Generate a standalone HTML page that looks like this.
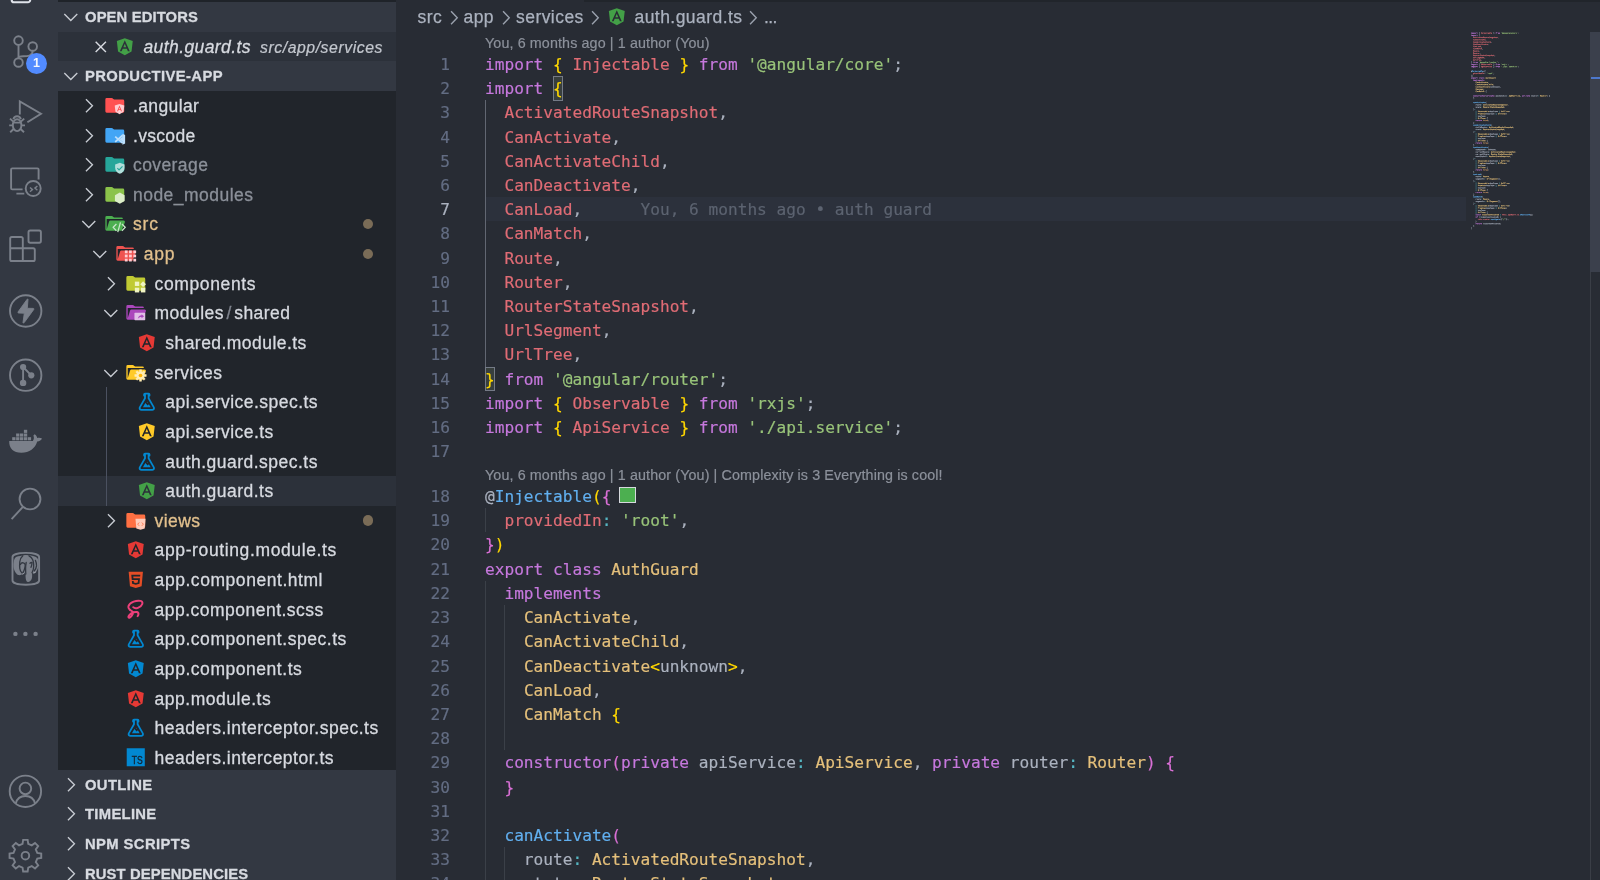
<!DOCTYPE html><html lang="en"><head><meta charset="utf-8"><title>auth.guard.ts — productive-app</title><style>
*{box-sizing:border-box;margin:0;padding:0}
html,body{width:1600px;height:880px;overflow:hidden;background:#282c34}
body{position:relative;font-family:"Liberation Sans",sans-serif;color:#d7dae0}
#act{will-change:transform;position:absolute;left:0;top:0;width:58px;height:880px;background:#333842}
#act svg{position:absolute;overflow:visible}
#act .badge{position:absolute;left:25.8px;top:52.5px;width:21.2px;height:21.2px;border-radius:50%;background:#528bff;color:#f4f7fd;font:bold 12.5px/21.2px "Liberation Sans",sans-serif;text-align:center}
#side{will-change:transform;position:absolute;left:58px;top:0;width:338px;height:880px;background:#21252b;overflow:hidden}
#side .topstrip{position:absolute;left:0;top:0;width:338px;height:2px;background:#1f2329}
.hdr{position:absolute;left:0;width:338px;height:29.7px;background:#333842}
.hdr svg{position:absolute;left:2.4px;top:4px}
.hdr .hl{-webkit-text-stroke:.3px;position:absolute;left:27px;top:0;line-height:30.6px;font-weight:bold;font-size:14.8px;letter-spacing:.12px;color:#d7dae0;white-space:nowrap}
#tree{position:absolute;left:0;top:90.9px;width:338px;height:678.8px;overflow:hidden}
.row{position:absolute;left:0;width:338px;height:29.64px;white-space:nowrap}
.row.sel{background:#2c313a}
.row .lbl{-webkit-text-stroke:.3px;position:absolute;top:0;line-height:31.2px;font-size:17.5px;letter-spacing:.42px;color:#d7dae0}
.row .desc{-webkit-text-stroke:.2px;position:absolute;top:0;line-height:31.4px;font-size:15.8px;letter-spacing:.55px;color:#c3c7ce}
.row .it{font-style:italic}
.row.dim .lbl{color:#8b9099}
.row.mod .lbl{color:#e2c08d}
.row .sl{font-style:normal;color:#7f848e;padding:0 2.5px}
.row .ic{position:absolute;top:4px;width:21.6px;height:21.6px}
.row .ic svg{display:block;width:21.6px;height:21.6px;overflow:visible}
.row .chv{position:absolute;top:4px;width:21.6px;height:21.6px}
.row .chv svg{display:block}
.row .dot{position:absolute;left:304.5px;top:9.6px;width:10.4px;height:10.4px;border-radius:50%;background:#7a6c57}
.row .cx{position:absolute;left:32.5px;top:4.2px}
.guide{margin-left:-.8px;position:absolute;width:1px;background:#4b5160}
#ed{will-change:transform;position:absolute;left:396px;top:0;width:1204px;height:880px;background:#282c34;overflow:hidden}
#ed .tabstrip{position:absolute;left:188px;top:0;width:1016px;height:1.8px;background:#21252b}
#bc{position:absolute;left:0;top:2px;width:1204px;height:29.6px;font-size:17.5px;color:#abb2bf}
#bc span{-webkit-text-stroke:.25px;position:absolute;top:0;line-height:30.4px;white-space:nowrap;letter-spacing:.45px}
#bc .bs{top:4.6px;line-height:0}
#bc .bi{top:4.2px;width:21.6px;height:21.6px;line-height:0}
#bc .bi svg{width:21.6px;height:21.6px}
#code{-webkit-text-stroke:.18px;z-index:0;position:absolute;left:0;top:0;width:1204px;height:880px;font-family:"DejaVu Sans Mono","Liberation Mono",monospace;font-size:16.15px;color:#abb2bf}
.cl{position:absolute;left:89px;height:24.25px;line-height:26.9px;white-space:pre}
.ln{position:absolute;left:0;width:54px;height:24.25px;line-height:26.9px;text-align:right;color:#636d83}
.ln.cur{color:#abb2bf}
.curline{position:absolute;left:89px;width:981px;height:24.25px;background:#2c313c}
.lens{-webkit-text-stroke:.2px;position:absolute;left:89px;height:20.3px;line-height:23.6px;font-family:"Liberation Sans",sans-serif;font-size:14.3px;letter-spacing:.12px;color:#8c919b;white-space:nowrap}
.ig{position:absolute;width:1px;background:#3b4048}
.ig.act{background:#626772}
.bm{position:relative}
.bm::before{content:"";box-sizing:border-box;position:absolute;left:0;top:-2.7px;width:9.7px;height:24.1px;border:1px solid #747a86;background:rgba(81,93,76,.4);z-index:-1}
.blame{color:#5c6370}
.sq{display:inline-block;width:17.6px;height:15.8px;background:#4caf50;border:1.3px solid #d5d8dd;vertical-align:-0.6px;margin-left:-2.4px}
#mm{position:absolute;left:1075px;top:32.2px;width:230px;height:360px;transform-origin:0 0;transform:scale(.5583,.5609);will-change:transform;font-family:"DejaVu Sans Mono","Liberation Mono",monospace;font-size:3.327px;line-height:4px;white-space:pre;color:#abb2bf;overflow:hidden;-webkit-text-stroke:.22px;opacity:.95}
#mm div{height:4px}
#mm span{-webkit-text-stroke-color:currentColor}
.sbtrack{position:absolute;left:1194px;top:32px;width:1px;height:848px;background:#3a3e46}
.sbslider{position:absolute;left:1194px;top:32px;width:10px;height:239.7px;background:#3b404c}
.sbmark{position:absolute;left:1194.5px;top:76.8px;width:9.5px;height:2.6px;background:#4d78cc}

</style></head><body>
<div id="act">
<svg width="58" height="880" viewBox="0 0 58 880" style="left:0;top:0"><path d="M11.7 -6 V0 a2.3 2.3 0 0 0 2.3 2.300 H27.900 a2.3 2.3 0 0 0 2.3 -2.300 V-6" fill="none" stroke="#e0e3ea" stroke-width="2.1"/><g fill="none" stroke="#7b808a" stroke-width="1.9"><circle cx="18.5" cy="40.6" r="4.3"/><circle cx="32.7" cy="46.5" r="4.3"/><circle cx="18.5" cy="62.5" r="4.3"/><path d="M18.5 44.9 V58.2 M32.7 50.8 C32.7 56.4 27 56.3 23.2 56.3 C20.5 56.3 18.5 57 18.5 58.2"/></g><g fill="none" stroke="#7b808a" stroke-width="1.9"><path d="M19.8 114.4 V101.4 L41 113.8 L27.4 122.3" stroke-linejoin="miter"/><ellipse cx="17.1" cy="125.2" rx="4.3" ry="5.9"/><path d="M13 122.6 H21.2 M13.4 119.2 A3.8 3.8 0 0 1 20.8 119.2" /><path d="M12.8 125.4 H9.2 M21.4 125.4 H25 M13.3 121.6 L10 118.6 M20.9 121.6 L24.2 118.6 M13.6 129 L10.2 132.2 M20.6 129 L24 132.2"/></g><g fill="none" stroke="#7b808a" stroke-width="1.9"><path d="M22.6 189.4 H12.3 a1.2 1.2 0 0 1 -1.2 -1.2 V169.6 a1.2 1.2 0 0 1 1.2 -1.2 H37.4 a1.2 1.2 0 0 1 1.2 1.2 V179.6 M16.4 193.6 H24.3"/><circle cx="33.2" cy="188.5" r="7.5"/><path d="M30 187.5 L32.5 189.6 L30 191.8 M37.4 186 L34.9 188.1 L37.4 190.3" stroke-width="1.4"/></g><g fill="none" stroke="#7b808a" stroke-width="1.9"><path d="M22.8 248.3 V238.6 a1.6 1.6 0 0 0 -1.6 -1.6 H11.8 a1.6 1.6 0 0 0 -1.6 1.6 V259.4 a1.6 1.6 0 0 0 1.6 1.6 H33.2 a1.6 1.6 0 0 0 1.6 -1.6 V249.9 a1.6 1.6 0 0 0 -1.6 -1.6 H10.2 M22.8 248.3 V261"/><rect x="28.5" y="230.5" width="12.4" height="12.2" rx="1.7"/></g><circle cx="25.7" cy="311" r="15.7" fill="none" stroke="#7b808a" stroke-width="1.9"/><path d="M27.2 299.2 L18 312 Q17.6 312.9 18.6 313 L24.3 313.2 L23 322.6 Q23.3 323.6 24.2 322.6 L33.8 309.4 Q34.2 308.5 33.2 308.4 L27.3 308.3 L28 299.4 Q27.8 298.6 27.2 299.2Z" fill="#7b808a" stroke="#7b808a" stroke-width="0.9" stroke-linejoin="round"/><circle cx="25.7" cy="375.2" r="15.7" fill="none" stroke="#7b808a" stroke-width="1.9"/><g fill="#7b808a"><circle cx="23.1" cy="367" r="3.1"/><circle cx="31.3" cy="375.3" r="3.1"/><circle cx="23.1" cy="382.9" r="3.2"/></g><path d="M23.1 367 V382.9 M23.1 367 L31.3 375.3" fill="none" stroke="#7b808a" stroke-width="1.9" stroke-width="1.5"/><g fill="#7b808a"><path d="M9.2 441 H32.8 C34 439.6 34.2 437.6 33.4 435.6 L34.6 434.3 C36.2 435.2 37 436.6 37.2 438 C38.8 437.4 40.6 437.6 42 438.6 C41.2 440.4 39.6 441.4 37.2 441.6 C35.2 448.6 29.4 452.8 21.4 452.8 C13.4 452.8 9 448.4 9.2 441Z"/><rect x="12.2" y="437.2" width="3.3" height="3.1"/><rect x="16.1" y="437.2" width="3.3" height="3.1"/><rect x="20" y="437.2" width="3.3" height="3.1"/><rect x="23.9" y="437.2" width="3.3" height="3.1"/><rect x="27.8" y="437.2" width="3.3" height="3.1"/><rect x="16.1" y="433.5" width="3.3" height="3.1"/><rect x="20" y="433.5" width="3.3" height="3.1"/><rect x="23.9" y="433.5" width="3.3" height="3.1"/><rect x="23.9" y="429.8" width="3.3" height="3.1"/></g><g fill="none" stroke="#7b808a" stroke-width="1.9"><circle cx="30" cy="499" r="10.4"/><path d="M22.9 506.8 L11.6 519.2"/></g><g><path d="M12.5 557 C12.5 554.600 18 552.900 25.800 552.900 C33.600 552.900 39.100 554.600 39.100 557 V580.600 C39.100 583 33.600 584.800 25.800 584.800 C18 584.800 12.500 583 12.500 580.600Z" fill="none" stroke="#7b808a" stroke-width="1.9"/><path d="M14 560.400 C13.500 562.600 13.400 565 13.600 567.300 C13.900 569.400 14.600 571.300 15.700 572.700 C16.500 573.900 17.400 574.800 18.400 575.100 C19.600 575.400 20.800 575.100 21.800 574.400 C22.500 573.900 23 573.300 23.500 572.700 C24.200 573.300 24.900 573.800 25.600 574.100 C25.500 575.700 25.500 577.400 25.800 578.900 C26.100 580.300 26.600 581.300 27.300 581.700 C28.200 582.100 29.200 581.900 30 581.200 C30.900 580.400 31.600 579.400 31.900 578.200 C32.300 576.400 32.100 574.500 32 572.700 C32.700 573.200 33.400 573.500 34.100 573.400 C35.200 573.200 36.100 572.100 36.800 570.700 C37.600 569.300 38.200 567.600 38.500 565.900 C38.800 563.800 38.700 561.700 38.200 559.800 C37.700 558.300 36.700 557.300 35.400 556.700 C34 556 32.400 555.700 30.700 555.500 C29.100 555.300 27.500 555.100 25.900 555.100 C24 555.100 22.200 555.500 20.400 556 C18.800 556.200 17.300 556.400 16 557 C14.900 557.800 14.300 559 14 560.400Z" fill="#7b808a"/><g fill="none" stroke="#333842" stroke-width="1.300" stroke-linecap="round"><path d="M22.800 555.800 C21 557.400 20 559.500 19.800 561.800 C19.600 564 19.500 566.400 19.800 568.600 C20.100 570.300 20.800 571.800 21.800 572.700 C22.500 573.300 23.200 573.500 23.900 573.400"/><path d="M20.400 564.500 C20.900 563.200 22 562.600 23.200 562.800 C24.400 563 25.100 563.800 25.200 564.900 C25.200 566.700 24.800 568.400 24.200 570 C23.900 571 23.400 571.900 22.800 572.700"/><path d="M26.200 562.500 C25.800 564.500 25.600 566.600 25.600 568.600 C25.600 570.400 25.700 572.300 25.800 574.100"/><path d="M29 555.800 C30.700 556.600 32 558 32.700 559.800 C33.400 561.500 33.700 563.400 33.700 565.200 C33.700 566.800 33.500 568.500 33.100 570 C32.800 571 32.400 571.900 32 572.700"/><path d="M30 563.200 C30.700 562.500 31.400 562.300 32 562.500 C32 564.200 31.600 565.800 31 567.300"/><path d="M35.400 560.400 C36.200 562.100 36.600 564 36.500 565.900 C36.300 567.700 35.600 569.400 34.400 570.700"/></g><path d="M22 574.200 L24.100 573.400 M33.500 573 L35.800 572" stroke="#9ea2ab" stroke-width="1" fill="none"/></g><g fill="#7b808a"><circle cx="15.4" cy="633.9" r="2.2"/><circle cx="25.4" cy="633.9" r="2.2"/><circle cx="35.6" cy="633.9" r="2.2"/></g><g fill="none" stroke="#7b808a" stroke-width="1.9"><circle cx="25.4" cy="791.3" r="15.7"/><circle cx="25.4" cy="788.4" r="5.8"/><path d="M15.8 803.4 C17 798.6 20.8 796 25.4 796 C30 796 33.8 798.6 35 803.4"/></g><g fill="none" stroke="#7b808a" stroke-width="1.9"><path d="M22.55 843.84 L23.15 839.86 L27.65 839.86 L28.25 843.84 L31.77 845.30 L35.01 842.91 L38.19 846.09 L35.80 849.33 L37.26 852.85 L41.24 853.45 L41.24 857.95 L37.26 858.55 L35.80 862.07 L38.19 865.31 L35.01 868.49 L31.77 866.10 L28.25 867.56 L27.65 871.54 L23.15 871.54 L22.55 867.56 L19.03 866.10 L15.79 868.49 L12.61 865.31 L15.00 862.07 L13.54 858.55 L9.56 857.95 L9.56 853.45 L13.54 852.85 L15.00 849.33 L12.61 846.09 L15.79 842.91 L19.03 845.30Z" stroke-linejoin="miter"/><circle cx="25.4" cy="855.7" r="3.8"/></g></svg><div class="badge">1</div>
</div>
<div id="side">
<div class="topstrip"></div>
<div class="hdr" style="top:2px"><svg width="21.6" height="21.6" viewBox="0 0 16 16"><path d="M3.2 5.9 L8 10.7 L12.8 5.9" fill="none" stroke="#c8ccd3" stroke-width="1"/></svg><span class="hl" style="letter-spacing:0.12px">OPEN EDITORS</span></div>
<div class="row sel" style="top:31.6px;height:29.7px"><svg class="cx" style="margin-left:-1px" width="21.6" height="21.6" viewBox="0 0 16 16"><path d="M4.6 4.6 L12.2 12.2 M12.2 4.6 L4.6 12.2" transform="translate(-0.4,-0.3)" fill="none" stroke="#d7dae0" stroke-width="1.05"/></svg><span class="ic" style="left:55.8px"><svg viewBox="0 0 24 24"><path d="M12 2.5l8.84 3.15-1.34 11.7L12 21.5l-7.5-4.15-1.34-11.7L12 2.5m0 2.1L6.47 17h2.06l1.11-2.78h4.7L15.45 17h2.06L12 4.6m1.62 7.9h-3.23L12 8.63z" fill="#43a047"/></svg></span><span class="lbl it" style="left:85.4px">auth.guard.ts</span><span class="desc it" style="left:202px">src/app/services</span></div>
<div class="hdr" style="top:61.3px"><svg width="21.6" height="21.6" viewBox="0 0 16 16"><path d="M3.2 5.9 L8 10.7 L12.8 5.9" fill="none" stroke="#c8ccd3" stroke-width="1"/></svg><span class="hl" style="letter-spacing:0.4px">PRODUCTIVE-APP</span></div>
<div id="tree">
<div class="row " style="top:0.00px"><span class="chv" style="left:19.9px"><svg width="21.6" height="21.6" viewBox="0 0 16 16"><path d="M5.9 3.2 L10.7 8 L5.9 12.8" fill="none" stroke="#c8ccd3" stroke-width="1"/></svg></span><span class="ic" style="left:45.9px"><svg viewBox="0 0 32 32"><path d="M13.844 7.536l-1.288-1.072A2 2 0 0 0 11.276 6H4a2 2 0 0 0-2 2v16a2 2 0 0 0 2 2h24a2 2 0 0 0 2-2V10a2 2 0 0 0-2-2H15.124a2 2 0 0 1-1.28-.464z" fill="#ff5252" transform="translate(0,15.4) scale(1,1.1) translate(0,-16)"/><path d="M23 13.2l7.1 2.5-1.1 9.3-6 3.4-6-3.4-1.100-9.3z" fill="#ffcdd2"/><path d="M23 15.6l-3.700 8.600h1.500l.75-1.900h2.900l.75 1.900h1.500z m-.95 5.500l.95-2.400.95 2.400z" fill="#ff5252"/></svg></span><span class="lbl" style="left:75.0px;letter-spacing:0.38px">.angular</span></div>
<div class="row " style="top:29.64px"><span class="chv" style="left:19.9px"><svg width="21.6" height="21.6" viewBox="0 0 16 16"><path d="M5.9 3.2 L10.7 8 L5.9 12.8" fill="none" stroke="#c8ccd3" stroke-width="1"/></svg></span><span class="ic" style="left:45.9px"><svg viewBox="0 0 32 32"><path d="M13.844 7.536l-1.288-1.072A2 2 0 0 0 11.276 6H4a2 2 0 0 0-2 2v16a2 2 0 0 0 2 2h24a2 2 0 0 0 2-2V10a2 2 0 0 0-2-2H15.124a2 2 0 0 1-1.28-.464z" fill="#42a5f5" transform="translate(0,15.4) scale(1,1.1) translate(0,-16)"/><path d="M27.300 12.800 L31.300 14.700 V27.500 L27.300 29.400z M27.300 17.600 L22.800 21.100 L27.300 24.600z" fill="#bbdefb" fill-rule="evenodd"/><path d="M16.600 17.300 L27.600 27 M16.600 24.900 L27.600 15.200" fill="none" stroke="#bbdefb" stroke-width="2.500"/></svg></span><span class="lbl" style="left:75.0px;letter-spacing:0.31px">.vscode</span></div>
<div class="row dim" style="top:59.28px"><span class="chv" style="left:19.9px"><svg width="21.6" height="21.6" viewBox="0 0 16 16"><path d="M5.9 3.2 L10.7 8 L5.9 12.8" fill="none" stroke="#c8ccd3" stroke-width="1"/></svg></span><span class="ic" style="left:45.9px"><svg viewBox="0 0 32 32"><path d="M13.844 7.536l-1.288-1.072A2 2 0 0 0 11.276 6H4a2 2 0 0 0-2 2v16a2 2 0 0 0 2 2h24a2 2 0 0 0 2-2V10a2 2 0 0 0-2-2H15.124a2 2 0 0 1-1.28-.464z" fill="#26a69a" transform="translate(0,15.4) scale(1,1.1) translate(0,-16)"/><path d="M23.500 12.800 L30.500 15.600 V20.400 C30.500 24.600 27.500 28.200 23.500 29.400 C19.500 28.200 16.500 24.600 16.500 20.400 V15.600z" fill="#b2dfdb"/><path d="M19.800 21 L22.300 23.500 L27.400 18.400" fill="none" stroke="#26a69a" stroke-width="1.7"/></svg></span><span class="lbl" style="left:75.0px;letter-spacing:0.41px">coverage</span></div>
<div class="row dim" style="top:88.92px"><span class="chv" style="left:19.9px"><svg width="21.6" height="21.6" viewBox="0 0 16 16"><path d="M5.9 3.2 L10.7 8 L5.9 12.8" fill="none" stroke="#c8ccd3" stroke-width="1"/></svg></span><span class="ic" style="left:45.9px"><svg viewBox="0 0 32 32"><path d="M13.844 7.536l-1.288-1.072A2 2 0 0 0 11.276 6H4a2 2 0 0 0-2 2v16a2 2 0 0 0 2 2h24a2 2 0 0 0 2-2V10a2 2 0 0 0-2-2H15.124a2 2 0 0 1-1.28-.464z" fill="#8bc34a" transform="translate(0,15.4) scale(1,1.1) translate(0,-16)"/><path d="M23.400 12.600 L30.600 16.700 V25.100 L23.400 29.200 L16.200 25.100 V16.700z" fill="#dcedc8"/></svg></span><span class="lbl" style="left:75.0px;letter-spacing:0.47px">node_modules</span></div>
<div class="row mod" style="top:118.56px"><span class="chv" style="left:19.9px"><svg width="21.6" height="21.6" viewBox="0 0 16 16"><path d="M3.2 5.9 L8 10.7 L12.8 5.9" fill="none" stroke="#c8ccd3" stroke-width="1"/></svg></span><span class="ic" style="left:45.9px"><svg viewBox="0 0 32 32"><path d="M28.967 12H9.442a2 2 0 0 0-1.898 1.368L4 24V10h24a2 2 0 0 0-2-2H15.124a2 2 0 0 1-1.28-.464l-1.288-1.072A2 2 0 0 0 11.276 6H4a2 2 0 0 0-2 2v16a2 2 0 0 0 2 2h22l4.805-11.212A2 2 0 0 0 28.967 12z" fill="#4caf50" transform="translate(0,15.4) scale(1,1.1) translate(0,-16)"/><g fill="none" stroke="#c8e6c9" stroke-width="1.9"><path d="M18.400 16.400 L13.600 21.300 L18.400 26.200 M26.600 16.400 L31.400 21.300 L26.600 26.200 M24.400 14 L20.400 28.400"/></g></svg></span><span class="lbl" style="left:75.0px;letter-spacing:0.78px">src</span><span class="dot"></span></div>
<div class="row mod" style="top:148.20px"><span class="chv" style="left:30.7px"><svg width="21.6" height="21.6" viewBox="0 0 16 16"><path d="M3.2 5.9 L8 10.7 L12.8 5.9" fill="none" stroke="#c8ccd3" stroke-width="1"/></svg></span><span class="ic" style="left:56.6px"><svg viewBox="0 0 32 32"><path d="M28.967 12H9.442a2 2 0 0 0-1.898 1.368L4 24V10h24a2 2 0 0 0-2-2H15.124a2 2 0 0 1-1.28-.464l-1.288-1.072A2 2 0 0 0 11.276 6H4a2 2 0 0 0-2 2v16a2 2 0 0 0 2 2h22l4.805-11.212A2 2 0 0 0 28.967 12z" fill="#ef5350" transform="translate(0,15.4) scale(1,1.1) translate(0,-16)"/><rect x="14.6" y="11.1" width="4.1" height="4.1" fill="#ffcdd2"/><rect x="14.6" y="17.2" width="4.1" height="4.1" fill="#ffcdd2"/><rect x="14.6" y="23.3" width="4.1" height="4.1" fill="#ffcdd2"/><rect x="20.8" y="11.1" width="4.1" height="4.1" fill="#ffcdd2"/><rect x="20.8" y="17.2" width="4.1" height="4.1" fill="#ffcdd2"/><rect x="20.8" y="23.3" width="4.1" height="4.1" fill="#ffcdd2"/><rect x="27.2" y="11.1" width="4.1" height="4.1" fill="#ffcdd2"/><rect x="27.2" y="17.2" width="4.1" height="4.1" fill="#ffcdd2"/><rect x="27.2" y="23.3" width="4.1" height="4.1" fill="#ffcdd2"/></svg></span><span class="lbl" style="left:85.8px;letter-spacing:0.70px">app</span><span class="dot"></span></div>
<div class="row " style="top:177.84px"><span class="chv" style="left:41.5px"><svg width="21.6" height="21.6" viewBox="0 0 16 16"><path d="M5.9 3.2 L10.7 8 L5.9 12.8" fill="none" stroke="#c8ccd3" stroke-width="1"/></svg></span><span class="ic" style="left:67.4px"><svg viewBox="0 0 32 32"><path d="M13.844 7.536l-1.288-1.072A2 2 0 0 0 11.276 6H4a2 2 0 0 0-2 2v16a2 2 0 0 0 2 2h24a2 2 0 0 0 2-2V10a2 2 0 0 0-2-2H15.124a2 2 0 0 1-1.28-.464z" fill="#c0ca33" transform="translate(0,15.4) scale(1,1.1) translate(0,-16)"/><rect x="14.6" y="12.8" width="6.5" height="6.4" fill="#f0f4c3"/><rect x="14.6" y="21.800" width="6.5" height="7" fill="#f0f4c3"/><rect x="23.500" y="21.800" width="6.7" height="7" fill="#f0f4c3"/><path d="M26.800 12.300 L31.100 16.600 L26.800 20.900 L22.500 16.600z" fill="#f0f4c3"/></svg></span><span class="lbl" style="left:96.6px;letter-spacing:0.62px">components</span></div>
<div class="row " style="top:207.48px"><span class="chv" style="left:41.5px"><svg width="21.6" height="21.6" viewBox="0 0 16 16"><path d="M3.2 5.9 L8 10.7 L12.8 5.9" fill="none" stroke="#c8ccd3" stroke-width="1"/></svg></span><span class="ic" style="left:67.4px"><svg viewBox="0 0 32 32"><path d="M28.967 12H9.442a2 2 0 0 0-1.898 1.368L4 24V10h24a2 2 0 0 0-2-2H15.124a2 2 0 0 1-1.28-.464l-1.288-1.072A2 2 0 0 0 11.276 6H4a2 2 0 0 0-2 2v16a2 2 0 0 0 2 2h22l4.805-11.212A2 2 0 0 0 28.967 12z" fill="#ab47bc" transform="translate(0,15.4) scale(1,1.1) translate(0,-16)"/><rect x="14" y="16" width="16" height="11" rx="1" fill="#e1bee7"/><path d="M24.500 18 L28.200 21 L24.500 24 V22.200 C22 22.200 20.300 23 19 25 C19.500 21.800 21.300 19.900 24.500 19.600z" fill="#ab47bc"/></svg></span><span class="lbl" style="left:96.6px;letter-spacing:0.45px">modules<i class="sl">/</i>shared</span></div>
<div class="row " style="top:237.12px"><span class="ic" style="left:78.2px"><svg viewBox="0 0 24 24"><path d="M12 2.5l8.84 3.15-1.34 11.7L12 21.5l-7.5-4.15-1.34-11.7L12 2.5m0 2.1L6.47 17h2.06l1.11-2.78h4.7L15.45 17h2.06L12 4.6m1.62 7.9h-3.23L12 8.63z" fill="#e53935"/></svg></span><span class="lbl" style="left:107.3px;letter-spacing:0.45px">shared.module.ts</span></div>
<div class="row " style="top:266.76px"><span class="chv" style="left:41.5px"><svg width="21.6" height="21.6" viewBox="0 0 16 16"><path d="M3.2 5.9 L8 10.7 L12.8 5.9" fill="none" stroke="#c8ccd3" stroke-width="1"/></svg></span><span class="ic" style="left:67.4px"><svg viewBox="0 0 32 32"><path d="M28.967 12H9.442a2 2 0 0 0-1.898 1.368L4 24V10h24a2 2 0 0 0-2-2H15.124a2 2 0 0 1-1.28-.464l-1.288-1.072A2 2 0 0 0 11.276 6H4a2 2 0 0 0-2 2v16a2 2 0 0 0 2 2h22l4.805-11.212A2 2 0 0 0 28.967 12z" fill="#ffca28" transform="translate(0,15.4) scale(1,1.1) translate(0,-16)"/><path d="M21.62 14.26 L21.52 11.53 L24.48 11.53 L24.38 14.26 L26.08 14.97 L27.95 12.96 L30.04 15.05 L28.03 16.92 L28.74 18.62 L31.47 18.52 L31.47 21.48 L28.74 21.38 L28.03 23.08 L30.04 24.95 L27.95 27.04 L26.08 25.03 L24.38 25.74 L24.48 28.47 L21.52 28.47 L21.62 25.74 L19.92 25.03 L18.05 27.04 L15.96 24.95 L17.97 23.08 L17.26 21.38 L14.53 21.48 L14.53 18.52 L17.26 18.62 L17.97 16.92 L15.96 15.05 L18.05 12.96 L19.92 14.97Z" fill="#ffecb3" stroke="#ffecb3" stroke-width="0.8" stroke-linejoin="round"/><circle cx="23" cy="20" r="2.7" fill="#ffb300"/></svg></span><span class="lbl" style="left:96.6px;letter-spacing:0.46px">services</span></div>
<div class="row " style="top:296.40px"><span class="ic" style="left:78.2px"><svg viewBox="0 0 24 24"><path d="M5,19A1,1 0 0,0 6,20H18A1,1 0 0,0 19,19C19,18.79 18.93,18.59 18.82,18.43L13,8.35V4H11V8.35L5.18,18.43C5.07,18.59 5,18.79 5,19M6,22A3,3 0 0,1 3,19C3,18.4 3.18,17.84 3.5,17.37L9,7.81V6A1,1 0 0,1 8,5V4A2,2 0 0,1 10,2H14A2,2 0 0,1 16,4V5A1,1 0 0,1 15,6V7.81L20.5,17.37C20.82,17.84 21,18.4 21,19A3,3 0 0,1 18,22H6M13,16L14.34,14.66L16.27,18H7.73L10.39,13.39L13,16M12.5,12A0.5,0.5 0 0,1 13,12.5A0.5,0.5 0 0,1 12.5,13A0.5,0.5 0 0,1 12,12.5A0.5,0.5 0 0,1 12.5,12Z" fill="#0288d1"/></svg></span><span class="lbl" style="left:107.3px;letter-spacing:0.46px">api.service.spec.ts</span></div>
<div class="row " style="top:326.04px"><span class="ic" style="left:78.2px"><svg viewBox="0 0 24 24"><path d="M12 2.5l8.84 3.15-1.34 11.7L12 21.5l-7.5-4.15-1.34-11.7L12 2.5m0 2.1L6.47 17h2.06l1.11-2.78h4.7L15.45 17h2.06L12 4.6m1.62 7.9h-3.23L12 8.63z" fill="#ffca28"/></svg></span><span class="lbl" style="left:107.3px;letter-spacing:0.45px">api.service.ts</span></div>
<div class="row " style="top:355.68px"><span class="ic" style="left:78.2px"><svg viewBox="0 0 24 24"><path d="M5,19A1,1 0 0,0 6,20H18A1,1 0 0,0 19,19C19,18.79 18.93,18.59 18.82,18.43L13,8.35V4H11V8.35L5.18,18.43C5.07,18.59 5,18.79 5,19M6,22A3,3 0 0,1 3,19C3,18.4 3.18,17.84 3.5,17.37L9,7.81V6A1,1 0 0,1 8,5V4A2,2 0 0,1 10,2H14A2,2 0 0,1 16,4V5A1,1 0 0,1 15,6V7.81L20.5,17.37C20.82,17.84 21,18.4 21,19A3,3 0 0,1 18,22H6M13,16L14.34,14.66L16.27,18H7.73L10.39,13.39L13,16M12.5,12A0.5,0.5 0 0,1 13,12.5A0.5,0.5 0 0,1 12.5,13A0.5,0.5 0 0,1 12,12.5A0.5,0.5 0 0,1 12.5,12Z" fill="#0288d1"/></svg></span><span class="lbl" style="left:107.3px;letter-spacing:0.48px">auth.guard.spec.ts</span></div>
<div class="row sel" style="top:385.32px"><span class="ic" style="left:78.2px"><svg viewBox="0 0 24 24"><path d="M12 2.5l8.84 3.15-1.34 11.7L12 21.5l-7.5-4.15-1.34-11.7L12 2.5m0 2.1L6.47 17h2.06l1.11-2.78h4.7L15.45 17h2.06L12 4.6m1.62 7.9h-3.23L12 8.63z" fill="#43a047"/></svg></span><span class="lbl" style="left:107.3px;letter-spacing:0.48px">auth.guard.ts</span></div>
<div class="row mod" style="top:414.96px"><span class="chv" style="left:41.5px"><svg width="21.6" height="21.6" viewBox="0 0 16 16"><path d="M5.9 3.2 L10.7 8 L5.9 12.8" fill="none" stroke="#c8ccd3" stroke-width="1"/></svg></span><span class="ic" style="left:67.4px"><svg viewBox="0 0 32 32"><path d="M13.844 7.536l-1.288-1.072A2 2 0 0 0 11.276 6H4a2 2 0 0 0-2 2v16a2 2 0 0 0 2 2h24a2 2 0 0 0 2-2V10a2 2 0 0 0-2-2H15.124a2 2 0 0 1-1.28-.464z" fill="#ff7043" transform="translate(0,15.4) scale(1,1.1) translate(0,-16)"/><path d="M15.500 13 H30.500 L29.200 27.400 L23 29.400 L16.800 27.400z" fill="#ffccbc"/><path d="M21 18.600 L18.800 21 L21 23.400 M25 18.600 L27.200 21 L25 23.400" fill="none" stroke="#ff7043" stroke-width="1.300"/></svg></span><span class="lbl" style="left:96.6px;letter-spacing:0.41px">views</span><span class="dot"></span></div>
<div class="row " style="top:444.60px"><span class="ic" style="left:67.4px"><svg viewBox="0 0 24 24"><path d="M12 2.5l8.84 3.15-1.34 11.7L12 21.5l-7.5-4.15-1.34-11.7L12 2.5m0 2.1L6.47 17h2.06l1.11-2.78h4.7L15.45 17h2.06L12 4.6m1.62 7.9h-3.23L12 8.63z" fill="#e53935"/></svg></span><span class="lbl" style="left:96.6px;letter-spacing:0.62px">app-routing.module.ts</span></div>
<div class="row " style="top:474.24px"><span class="ic" style="left:67.4px"><svg viewBox="0 0 24 24"><path d="M12,17.56L16.07,16.43L16.62,10.33H9.38L9.2,8.3H16.8L17,6.31H7L7.56,12.32H14.45L14.22,14.9L12,15.5L9.78,14.9L9.64,13.24H7.64L7.93,16.43L12,17.56M4.07,3H19.93L18.5,19.2L12,21L5.5,19.2L4.07,3Z" fill="#e44d26"/></svg></span><span class="lbl" style="left:96.6px;letter-spacing:0.55px">app.component.html</span></div>
<div class="row " style="top:503.88px"><span class="ic" style="left:67.4px"><svg viewBox="0 0 24 24"><path d="M9.1 9.100 C10.500 10.600 12.800 10.400 14.400 9.800 C16.800 8.900 18.600 7.400 19.200 5.600 C19.800 3.800 19 2.600 17.200 2.100 C15.200 1.600 12 2 9.600 3 C6.800 4.200 4.400 6 3.800 8 C3.400 9.600 4 10.800 5.200 11.800 C6.400 12.800 8.200 13.400 8.700 14.600 C9.200 16 8.600 17.400 7.600 18.400 C6.600 19.600 5.600 20.600 4.900 20.800 C4 21 3.500 20 4 19 C4.600 17.800 5.600 17 6.600 16.300 C7.600 15.600 8.600 15.100 9.600 14.800 C11 14.400 12.400 14.200 13.300 14.500 C14.600 15 15.200 16 14.900 17.200 C14.700 18 14.400 18.600 14 19" fill="none" stroke="#ec407a" stroke-width="2.2" stroke-linecap="round" stroke-linejoin="round"/></svg></span><span class="lbl" style="left:96.6px;letter-spacing:0.48px">app.component.scss</span></div>
<div class="row " style="top:533.52px"><span class="ic" style="left:67.4px"><svg viewBox="0 0 24 24"><path d="M5,19A1,1 0 0,0 6,20H18A1,1 0 0,0 19,19C19,18.79 18.93,18.59 18.82,18.43L13,8.35V4H11V8.35L5.18,18.43C5.07,18.59 5,18.79 5,19M6,22A3,3 0 0,1 3,19C3,18.4 3.18,17.84 3.5,17.37L9,7.81V6A1,1 0 0,1 8,5V4A2,2 0 0,1 10,2H14A2,2 0 0,1 16,4V5A1,1 0 0,1 15,6V7.81L20.5,17.37C20.82,17.84 21,18.4 21,19A3,3 0 0,1 18,22H6M13,16L14.34,14.66L16.27,18H7.73L10.39,13.39L13,16M12.5,12A0.5,0.5 0 0,1 13,12.5A0.5,0.5 0 0,1 12.5,13A0.5,0.5 0 0,1 12,12.5A0.5,0.5 0 0,1 12.5,12Z" fill="#0288d1"/></svg></span><span class="lbl" style="left:96.6px;letter-spacing:0.54px">app.component.spec.ts</span></div>
<div class="row " style="top:563.16px"><span class="ic" style="left:67.4px"><svg viewBox="0 0 24 24"><path d="M12 2.5l8.84 3.15-1.34 11.7L12 21.5l-7.5-4.15-1.34-11.7L12 2.5m0 2.1L6.47 17h2.06l1.11-2.78h4.7L15.45 17h2.06L12 4.6m1.62 7.9h-3.23L12 8.63z" fill="#0288d1"/></svg></span><span class="lbl" style="left:96.6px;letter-spacing:0.54px">app.component.ts</span></div>
<div class="row " style="top:592.80px"><span class="ic" style="left:67.4px"><svg viewBox="0 0 24 24"><path d="M12 2.5l8.84 3.15-1.34 11.7L12 21.5l-7.5-4.15-1.34-11.7L12 2.5m0 2.1L6.47 17h2.06l1.11-2.78h4.7L15.45 17h2.06L12 4.6m1.62 7.9h-3.23L12 8.63z" fill="#e53935"/></svg></span><span class="lbl" style="left:96.6px;letter-spacing:0.51px">app.module.ts</span></div>
<div class="row " style="top:622.44px"><span class="ic" style="left:67.4px"><svg viewBox="0 0 24 24"><path d="M5,19A1,1 0 0,0 6,20H18A1,1 0 0,0 19,19C19,18.79 18.93,18.59 18.82,18.43L13,8.35V4H11V8.35L5.18,18.43C5.07,18.59 5,18.79 5,19M6,22A3,3 0 0,1 3,19C3,18.4 3.18,17.84 3.5,17.37L9,7.81V6A1,1 0 0,1 8,5V4A2,2 0 0,1 10,2H14A2,2 0 0,1 16,4V5A1,1 0 0,1 15,6V7.81L20.5,17.37C20.82,17.84 21,18.4 21,19A3,3 0 0,1 18,22H6M13,16L14.34,14.66L16.27,18H7.73L10.39,13.39L13,16M12.5,12A0.5,0.5 0 0,1 13,12.5A0.5,0.5 0 0,1 12.5,13A0.5,0.5 0 0,1 12,12.5A0.5,0.5 0 0,1 12.5,12Z" fill="#0288d1"/></svg></span><span class="lbl" style="left:96.6px;letter-spacing:0.52px">headers.interceptor.spec.ts</span></div>
<div class="row " style="top:652.08px"><span class="ic" style="left:67.4px"><svg viewBox="0 0 24 24"><rect x="1.9" y="1.4" width="20.100" height="20" fill="#0288d1"/><text x="7.6" y="19" font-family="Liberation Sans,sans-serif" font-size="11.6" textLength="12.2" lengthAdjust="spacingAndGlyphs" fill="#14222e" stroke="#14222e" stroke-width="0.35">TS</text></svg></span><span class="lbl" style="left:96.6px;letter-spacing:0.51px">headers.interceptor.ts</span></div>
<div class="guide" style="left:48.6px;top:296.4px;height:118.6px"></div>
</div>
<div class="hdr" style="top:769.7px"><svg width="21.6" height="21.6" viewBox="0 0 16 16"><path d="M5.9 3.2 L10.7 8 L5.9 12.8" fill="none" stroke="#c8ccd3" stroke-width="1"/></svg><span class="hl" style="letter-spacing:0.35px">OUTLINE</span></div>
<div class="hdr" style="top:799.34px"><svg width="21.6" height="21.6" viewBox="0 0 16 16"><path d="M5.9 3.2 L10.7 8 L5.9 12.8" fill="none" stroke="#c8ccd3" stroke-width="1"/></svg><span class="hl" style="letter-spacing:0.3px">TIMELINE</span></div>
<div class="hdr" style="top:828.98px"><svg width="21.6" height="21.6" viewBox="0 0 16 16"><path d="M5.9 3.2 L10.7 8 L5.9 12.8" fill="none" stroke="#c8ccd3" stroke-width="1"/></svg><span class="hl" style="letter-spacing:0.4px">NPM SCRIPTS</span></div>
<div class="hdr" style="top:858.62px"><svg width="21.6" height="21.6" viewBox="0 0 16 16"><path d="M5.9 3.2 L10.7 8 L5.9 12.8" fill="none" stroke="#c8ccd3" stroke-width="1"/></svg><span class="hl" style="letter-spacing:0.12px">RUST DEPENDENCIES</span></div>
</div>
<div id="ed">
<div class="tabstrip"></div>
<div id="bc"><span class="bt" style="left:21.5px">src</span><span class="bs" style="left:46.5px"><svg class="bsep" viewBox="0 0 16 16" width="21.5" height="21.5"><path d="M6 3.2 L10.6 8 L6 12.8" fill="none" stroke="#9aa1ad" stroke-width="1.05"/></svg></span><span class="bt" style="left:67.5px">app</span><span class="bs" style="left:98.5px"><svg class="bsep" viewBox="0 0 16 16" width="21.5" height="21.5"><path d="M6 3.2 L10.6 8 L6 12.8" fill="none" stroke="#9aa1ad" stroke-width="1.05"/></svg></span><span class="bt" style="left:120px">services</span><span class="bs" style="left:188px"><svg class="bsep" viewBox="0 0 16 16" width="21.5" height="21.5"><path d="M6 3.2 L10.6 8 L6 12.8" fill="none" stroke="#9aa1ad" stroke-width="1.05"/></svg></span><span class="bi" style="left:209.5px"><svg viewBox="0 0 24 24"><path d="M12 2.5l8.84 3.15-1.34 11.7L12 21.5l-7.5-4.15-1.34-11.7L12 2.5m0 2.1L6.47 17h2.06l1.11-2.78h4.7L15.45 17h2.06L12 4.6m1.62 7.9h-3.23L12 8.63z" fill="#43a047"/></svg></span><span class="bt" style="left:238.5px">auth.guard.ts</span><span class="bs" style="left:346px"><svg class="bsep" viewBox="0 0 16 16" width="21.5" height="21.5"><path d="M6 3.2 L10.6 8 L6 12.8" fill="none" stroke="#9aa1ad" stroke-width="1.05"/></svg></span><span class="bt" style="left:368px;letter-spacing:-.6px">...</span></div>
<div id="code">
<div class="curline" style="top:197.17px"></div>
<div class="lens" style="top:31.6px">You, 6 months ago | 1 author (You)</div>
<div class="lens" style="top:463.51px">You, 6 months ago | 1 author (You) | Complexity is 3 Everything is cool!</div>
<div class="ig act" style="left:89.00px;top:100.32px;height:266.34px"></div>
<div class="ig" style="left:89.00px;top:508.27px;height:24.21px"></div>
<div class="ig" style="left:89.00px;top:580.91px;height:314.76px"></div>
<div class="ig" style="left:108.44px;top:605.12px;height:145.27px"></div>
<div class="ig" style="left:108.44px;top:847.25px;height:48.42px"></div>
<div class="ln" style="top:51.90px">1</div>
<div class="cl" style="top:51.90px"><span style="color:#c678dd">import</span> <span style="color:#ffd700">{</span> <span style="color:#e06c75">Injectable</span> <span style="color:#ffd700">}</span> <span style="color:#c678dd">from</span> <span style="color:#98c379">'@angular/core'</span>;</div>
<div class="ln" style="top:76.11px">2</div>
<div class="cl" style="top:76.11px"><span style="color:#c678dd">import</span> <span class="bm" style="color:#ffd700">{</span></div>
<div class="ln" style="top:100.32px">3</div>
<div class="cl" style="top:100.32px">  <span style="color:#e06c75">ActivatedRouteSnapshot</span>,</div>
<div class="ln" style="top:124.54px">4</div>
<div class="cl" style="top:124.54px">  <span style="color:#e06c75">CanActivate</span>,</div>
<div class="ln" style="top:148.75px">5</div>
<div class="cl" style="top:148.75px">  <span style="color:#e06c75">CanActivateChild</span>,</div>
<div class="ln" style="top:172.96px">6</div>
<div class="cl" style="top:172.96px">  <span style="color:#e06c75">CanDeactivate</span>,</div>
<div class="ln cur" style="top:197.17px">7</div>
<div class="cl" style="top:197.17px">  <span style="color:#e06c75">CanLoad</span>,<span class="blame">      You, 6 months ago • auth guard</span></div>
<div class="ln" style="top:221.39px">8</div>
<div class="cl" style="top:221.39px">  <span style="color:#e06c75">CanMatch</span>,</div>
<div class="ln" style="top:245.60px">9</div>
<div class="cl" style="top:245.60px">  <span style="color:#e06c75">Route</span>,</div>
<div class="ln" style="top:269.81px">10</div>
<div class="cl" style="top:269.81px">  <span style="color:#e06c75">Router</span>,</div>
<div class="ln" style="top:294.02px">11</div>
<div class="cl" style="top:294.02px">  <span style="color:#e06c75">RouterStateSnapshot</span>,</div>
<div class="ln" style="top:318.24px">12</div>
<div class="cl" style="top:318.24px">  <span style="color:#e06c75">UrlSegment</span>,</div>
<div class="ln" style="top:342.45px">13</div>
<div class="cl" style="top:342.45px">  <span style="color:#e06c75">UrlTree</span>,</div>
<div class="ln" style="top:366.66px">14</div>
<div class="cl" style="top:366.66px"><span class="bm" style="color:#ffd700">}</span> <span style="color:#c678dd">from</span> <span style="color:#98c379">'@angular/router'</span>;</div>
<div class="ln" style="top:390.87px">15</div>
<div class="cl" style="top:390.87px"><span style="color:#c678dd">import</span> <span style="color:#ffd700">{</span> <span style="color:#e06c75">Observable</span> <span style="color:#ffd700">}</span> <span style="color:#c678dd">from</span> <span style="color:#98c379">'rxjs'</span>;</div>
<div class="ln" style="top:415.09px">16</div>
<div class="cl" style="top:415.09px"><span style="color:#c678dd">import</span> <span style="color:#ffd700">{</span> <span style="color:#e06c75">ApiService</span> <span style="color:#ffd700">}</span> <span style="color:#c678dd">from</span> <span style="color:#98c379">'./api.service'</span>;</div>
<div class="ln" style="top:439.30px">17</div>
<div class="cl" style="top:439.30px"></div>
<div class="ln" style="top:484.06px">18</div>
<div class="cl" style="top:484.06px">@<span style="color:#61afef">Injectable</span><span style="color:#ffd700">(</span><span style="color:#da70d6">{</span> <i class="sq"></i></div>
<div class="ln" style="top:508.27px">19</div>
<div class="cl" style="top:508.27px">  <span style="color:#e06c75">providedIn</span><span style="color:#56b6c2">:</span> <span style="color:#98c379">'root'</span>,</div>
<div class="ln" style="top:532.49px">20</div>
<div class="cl" style="top:532.49px"><span style="color:#da70d6">}</span><span style="color:#ffd700">)</span></div>
<div class="ln" style="top:556.70px">21</div>
<div class="cl" style="top:556.70px"><span style="color:#c678dd">export</span> <span style="color:#c678dd">class</span> <span style="color:#e5c07b">AuthGuard</span></div>
<div class="ln" style="top:580.91px">22</div>
<div class="cl" style="top:580.91px">  <span style="color:#c678dd">implements</span></div>
<div class="ln" style="top:605.12px">23</div>
<div class="cl" style="top:605.12px">    <span style="color:#e5c07b">CanActivate</span>,</div>
<div class="ln" style="top:629.34px">24</div>
<div class="cl" style="top:629.34px">    <span style="color:#e5c07b">CanActivateChild</span>,</div>
<div class="ln" style="top:653.55px">25</div>
<div class="cl" style="top:653.55px">    <span style="color:#e5c07b">CanDeactivate</span><span style="color:#ffd700">&lt;</span>unknown<span style="color:#ffd700">&gt;</span>,</div>
<div class="ln" style="top:677.76px">26</div>
<div class="cl" style="top:677.76px">    <span style="color:#e5c07b">CanLoad</span>,</div>
<div class="ln" style="top:701.97px">27</div>
<div class="cl" style="top:701.97px">    <span style="color:#e5c07b">CanMatch</span> <span style="color:#ffd700">{</span></div>
<div class="ln" style="top:726.19px">28</div>
<div class="cl" style="top:726.19px"></div>
<div class="ln" style="top:750.40px">29</div>
<div class="cl" style="top:750.40px">  <span style="color:#c678dd">constructor</span><span style="color:#da70d6">(</span><span style="color:#c678dd">private</span> apiService<span style="color:#56b6c2">:</span> <span style="color:#e5c07b">ApiService</span>, <span style="color:#c678dd">private</span> router<span style="color:#56b6c2">:</span> <span style="color:#e5c07b">Router</span><span style="color:#da70d6">)</span> <span style="color:#da70d6">{</span></div>
<div class="ln" style="top:774.61px">30</div>
<div class="cl" style="top:774.61px">  <span style="color:#da70d6">}</span></div>
<div class="ln" style="top:798.82px">31</div>
<div class="cl" style="top:798.82px"></div>
<div class="ln" style="top:823.04px">32</div>
<div class="cl" style="top:823.04px">  <span style="color:#61afef">canActivate</span><span style="color:#da70d6">(</span></div>
<div class="ln" style="top:847.25px">33</div>
<div class="cl" style="top:847.25px">    route<span style="color:#56b6c2">:</span> <span style="color:#e5c07b">ActivatedRouteSnapshot</span>,</div>
<div class="ln" style="top:871.46px">34</div>
<div class="cl" style="top:871.46px">    state<span style="color:#56b6c2">:</span> <span style="color:#e5c07b">RouterStateSnapshot</span>,</div>
</div>
<div id="mm"><div><span style="color:#c678dd">import</span> { <span style="color:#e06c75">Injectable</span> } <span style="color:#c678dd">from</span> <span style="color:#98c379">'@angular/core'</span>;</div><div><span style="color:#c678dd">import</span> {</div><div>  <span style="color:#e06c75">ActivatedRouteSnapshot</span>,</div><div>  <span style="color:#e06c75">CanActivate</span>,</div><div>  <span style="color:#e06c75">CanActivateChild</span>,</div><div>  <span style="color:#e06c75">CanDeactivate</span>,</div><div>  <span style="color:#e06c75">CanLoad</span>,</div><div>  <span style="color:#e06c75">CanMatch</span>,</div><div>  <span style="color:#e06c75">Route</span>,</div><div>  <span style="color:#e06c75">Router</span>,</div><div>  <span style="color:#e06c75">RouterStateSnapshot</span>,</div><div>  <span style="color:#e06c75">UrlSegment</span>,</div><div>  <span style="color:#e06c75">UrlTree</span>,</div><div>} <span style="color:#c678dd">from</span> <span style="color:#98c379">'@angular/router'</span>;</div><div><span style="color:#c678dd">import</span> { <span style="color:#e06c75">Observable</span> } <span style="color:#c678dd">from</span> <span style="color:#98c379">'rxjs'</span>;</div><div><span style="color:#c678dd">import</span> { <span style="color:#e06c75">ApiService</span> } <span style="color:#c678dd">from</span> <span style="color:#98c379">'./api.service'</span>;</div><div> </div><div>@<span style="color:#61afef">Injectable</span>({ </div><div>  <span style="color:#e06c75">providedIn</span><span style="color:#56b6c2">:</span> <span style="color:#98c379">'root'</span>,</div><div>})</div><div><span style="color:#c678dd">export</span> <span style="color:#c678dd">class</span> <span style="color:#e5c07b">AuthGuard</span></div><div>  <span style="color:#c678dd">implements</span></div><div>    <span style="color:#e5c07b">CanActivate</span>,</div><div>    <span style="color:#e5c07b">CanActivateChild</span>,</div><div>    <span style="color:#e5c07b">CanDeactivate</span>&lt;unknown&gt;,</div><div>    <span style="color:#e5c07b">CanLoad</span>,</div><div>    <span style="color:#e5c07b">CanMatch</span> {</div><div> </div><div>  <span style="color:#c678dd">constructor</span>(<span style="color:#c678dd">private</span> apiService<span style="color:#56b6c2">:</span> <span style="color:#e5c07b">ApiService</span>, <span style="color:#c678dd">private</span> router<span style="color:#56b6c2">:</span> <span style="color:#e5c07b">Router</span>) {</div><div>  }</div><div> </div><div>  <span style="color:#61afef">canActivate</span>(</div><div>    route<span style="color:#56b6c2">:</span> <span style="color:#e5c07b">ActivatedRouteSnapshot</span>,</div><div>    state<span style="color:#56b6c2">:</span> <span style="color:#e5c07b">RouterStateSnapshot</span>,</div><div>  )<span style="color:#56b6c2">:</span></div><div>    <span style="color:#56b6c2">|</span> <span style="color:#e5c07b">Observable</span>&lt;boolean <span style="color:#56b6c2">|</span> <span style="color:#e5c07b">UrlTree</span>&gt;</div><div>    <span style="color:#56b6c2">|</span> <span style="color:#e5c07b">Promise</span>&lt;boolean <span style="color:#56b6c2">|</span> <span style="color:#e5c07b">UrlTree</span>&gt;</div><div>    <span style="color:#56b6c2">|</span> boolean</div><div>    <span style="color:#56b6c2">|</span> <span style="color:#e5c07b">UrlTree</span> {</div><div>    <span style="color:#c678dd">return</span> <span style="color:#d19a66">true</span>;</div><div>  }</div><div>  <span style="color:#61afef">canActivateChild</span>(</div><div>    childRoute<span style="color:#56b6c2">:</span> <span style="color:#e5c07b">ActivatedRouteSnapshot</span>,</div><div>    state<span style="color:#56b6c2">:</span> <span style="color:#e5c07b">RouterStateSnapshot</span>,</div><div>  )<span style="color:#56b6c2">:</span></div><div>    <span style="color:#56b6c2">|</span> <span style="color:#e5c07b">Observable</span>&lt;boolean <span style="color:#56b6c2">|</span> <span style="color:#e5c07b">UrlTree</span>&gt;</div><div>    <span style="color:#56b6c2">|</span> <span style="color:#e5c07b">Promise</span>&lt;boolean <span style="color:#56b6c2">|</span> <span style="color:#e5c07b">UrlTree</span>&gt;</div><div>    <span style="color:#56b6c2">|</span> boolean</div><div>    <span style="color:#56b6c2">|</span> <span style="color:#e5c07b">UrlTree</span> {</div><div>    <span style="color:#c678dd">return</span> <span style="color:#d19a66">true</span>;</div><div>  }</div><div>  <span style="color:#61afef">canDeactivate</span>(</div><div>    component<span style="color:#56b6c2">:</span> unknown,</div><div>    currentRoute<span style="color:#56b6c2">:</span> <span style="color:#e5c07b">ActivatedRouteSnapshot</span>,</div><div>    currentState<span style="color:#56b6c2">:</span> <span style="color:#e5c07b">RouterStateSnapshot</span>,</div><div>    nextState?<span style="color:#56b6c2">:</span> <span style="color:#e5c07b">RouterStateSnapshot</span>,</div><div>  )<span style="color:#56b6c2">:</span></div><div>    <span style="color:#56b6c2">|</span> <span style="color:#e5c07b">Observable</span>&lt;boolean <span style="color:#56b6c2">|</span> <span style="color:#e5c07b">UrlTree</span>&gt;</div><div>    <span style="color:#56b6c2">|</span> <span style="color:#e5c07b">Promise</span>&lt;boolean <span style="color:#56b6c2">|</span> <span style="color:#e5c07b">UrlTree</span>&gt;</div><div>    <span style="color:#56b6c2">|</span> boolean</div><div>    <span style="color:#56b6c2">|</span> <span style="color:#e5c07b">UrlTree</span> {</div><div>    <span style="color:#c678dd">return</span> <span style="color:#d19a66">true</span>;</div><div>  }</div><div>  <span style="color:#61afef">canLoad</span>(</div><div>    route<span style="color:#56b6c2">:</span> <span style="color:#e5c07b">Route</span>,</div><div>    segments<span style="color:#56b6c2">:</span> <span style="color:#e5c07b">UrlSegment</span>[],</div><div>  )<span style="color:#56b6c2">:</span></div><div>    <span style="color:#56b6c2">|</span> <span style="color:#e5c07b">Observable</span>&lt;boolean <span style="color:#56b6c2">|</span> <span style="color:#e5c07b">UrlTree</span>&gt;</div><div>    <span style="color:#56b6c2">|</span> <span style="color:#e5c07b">Promise</span>&lt;boolean <span style="color:#56b6c2">|</span> <span style="color:#e5c07b">UrlTree</span>&gt;</div><div>    <span style="color:#56b6c2">|</span> boolean</div><div>    <span style="color:#56b6c2">|</span> <span style="color:#e5c07b">UrlTree</span> {</div><div>    <span style="color:#c678dd">return</span> <span style="color:#d19a66">true</span>;</div><div>  }</div><div>  <span style="color:#61afef">canMatch</span>(</div><div>    route<span style="color:#56b6c2">:</span> <span style="color:#e5c07b">Route</span>,</div><div>    segments<span style="color:#56b6c2">:</span> <span style="color:#e5c07b">UrlSegment</span>[],</div><div>  )<span style="color:#56b6c2">:</span></div><div>    <span style="color:#56b6c2">|</span> <span style="color:#e5c07b">Observable</span>&lt;boolean <span style="color:#56b6c2">|</span> <span style="color:#e5c07b">UrlTree</span>&gt;</div><div>    <span style="color:#56b6c2">|</span> <span style="color:#e5c07b">Promise</span>&lt;boolean <span style="color:#56b6c2">|</span> <span style="color:#e5c07b">UrlTree</span>&gt;</div><div>    <span style="color:#56b6c2">|</span> boolean</div><div>    <span style="color:#56b6c2">|</span> <span style="color:#e5c07b">UrlTree</span> {</div><div>    <span style="color:#c678dd">const</span> <span style="color:#e5c07b">isAuthenticated</span> <span style="color:#56b6c2">=</span> <span style="color:#e06c75">this</span>.<span style="color:#e06c75">apiService</span>.<span style="color:#61afef">checkAuth</span>();</div><div>    <span style="color:#c678dd">if</span> (<span style="color:#56b6c2">!</span>isAuthenticated) {</div><div>      <span style="color:#e06c75">this</span>.<span style="color:#e06c75">router</span>.<span style="color:#61afef">navigate</span>([<span style="color:#98c379">'/'</span>]);</div><div>    }</div><div>    <span style="color:#c678dd">return</span> isAuthenticated;</div><div>  }</div><div>}</div></div>
<div class="sbtrack"></div><div class="sbslider"></div><div class="sbmark"></div>
</div>
</body></html>
